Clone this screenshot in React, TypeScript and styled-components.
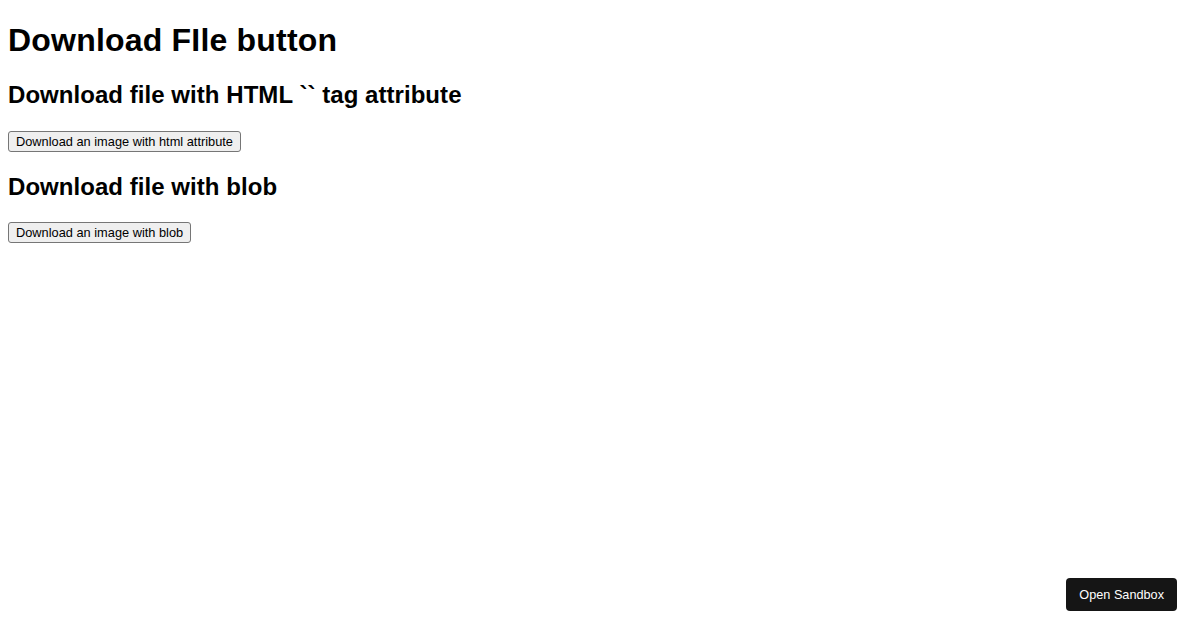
import styled, { createGlobalStyle } from 'styled-components';

const GlobalStyle = createGlobalStyle`
  body {
    margin: 0;
    padding: 0 8px;
    font-family: "Liberation Sans", Arial, sans-serif;
    background: #ffffff;
    color: #000000;
  }
`;

const Page = styled.main`
  display: block;
`;

const Title = styled.h1`
  font-size: 32px;
  line-height: 1.2;
  font-weight: bold;
  letter-spacing: 0.2px;
  margin: 21.44px 0;
`;

const SectionTitle = styled.h2`
  font-size: 24px;
  line-height: 1.2;
  font-weight: bold;
  letter-spacing: 0.05px;
  margin: 20.5px 0;
`;

const DownloadButton = styled.button`
  display: inline-block;
  height: 21.5px;
  padding: 0 7px;
  border: 1px solid #767676;
  border-radius: 3px;
  background: #efefef;
  color: #000000;
  font-family: "Liberation Sans", Arial, sans-serif;
  font-size: 12.8px;
  line-height: 19px;
`;

const SandboxButton = styled.a`
  position: fixed;
  right: 23px;
  bottom: 19px;
  display: flex;
  align-items: center;
  height: 33px;
  padding: 0 13px;
  border-radius: 4px;
  background: #151515;
  color: #ffffff;
  font-size: 12.7px;
  text-decoration: none;
`;

const App = () => {
  return (
    <>
      <GlobalStyle />
      <Page>
        <Title>Download FIle button</Title>
        <SectionTitle>Download file with HTML `` tag attribute</SectionTitle>
        <DownloadButton>Download an image with html attribute</DownloadButton>
        <SectionTitle>Download file with blob</SectionTitle>
        <DownloadButton>Download an image with blob</DownloadButton>
      </Page>
      <SandboxButton href="#">Open Sandbox</SandboxButton>
    </>
  );
};

export default App;
